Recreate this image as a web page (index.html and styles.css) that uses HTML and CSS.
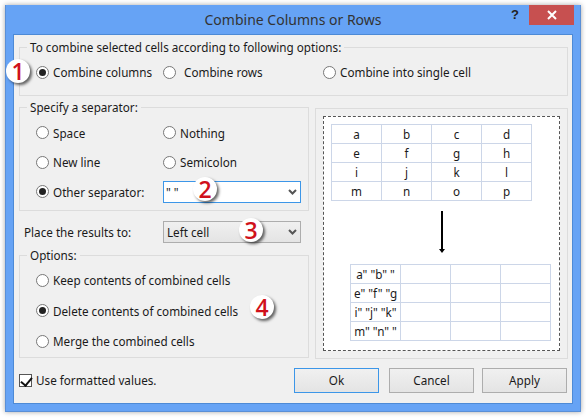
FILE: index.html
```html
<!DOCTYPE html>
<html lang="en">
<head>
<meta charset="utf-8">
<title>Combine Columns or Rows</title>
<link rel="stylesheet" href="styles.css">
</head>
<body>
<div class="window">
  <header class="titlebar">
    <span class="title">Combine Columns or Rows</span>
    <span class="help">?</span>
    <span class="close"><svg width="10" height="10" viewBox="0 0 10 10"><path d="M1 1L9 9M9 1L1 9" stroke="#fff" stroke-width="2"/></svg></span>
  </header>
  <main class="client">
    <fieldset class="group group-top">
      <legend>To combine selected cells according to following options:</legend>
      <div class="top-row">
        <label class="opt opt-a"><input type="radio" name="mode" checked><span>Combine columns</span></label>
        <label class="opt opt-b"><input type="radio" name="mode"><span class="wide">Combine rows</span></label>
        <label class="opt"><input type="radio" name="mode"><span>Combine into single cell</span></label>
      </div>
      <span class="badge badge-1">1</span>
    </fieldset>
    <div class="columns">
      <div class="left">
        <fieldset class="group group-sep">
          <legend>Specify a separator:</legend>
          <div class="sep-grid">
            <label class="opt"><input type="radio" name="sep"><span>Space</span></label>
            <label class="opt"><input type="radio" name="sep"><span>Nothing</span></label>
            <label class="opt"><input type="radio" name="sep"><span>New line</span></label>
            <label class="opt"><input type="radio" name="sep"><span>Semicolon</span></label>
            <label class="opt"><input type="radio" name="sep" checked><span>Other separator:</span></label>
            <div class="combo combo-edit"><span>" "</span><svg class="chev" width="9" height="6" viewBox="0 0 9 6"><path d="M1 1L4.500 4.500L8 1" fill="none" stroke="#555" stroke-width="2"/></svg></div>
          </div>
          <span class="badge badge-2">2</span>
        </fieldset>
        <div class="place">
          <span>Place the results to:</span>
          <div class="combo combo-btn"><span>Left cell</span><svg class="chev" width="9" height="6" viewBox="0 0 9 6"><path d="M1 1L4.500 4.500L8 1" fill="none" stroke="#555" stroke-width="2"/></svg></div>
          <span class="badge badge-3">3</span>
        </div>
        <fieldset class="group group-opts">
          <legend>Options:</legend>
          <div class="opts-list">
            <label class="opt"><input type="radio" name="res"><span>Keep contents of combined cells</span></label>
            <label class="opt"><input type="radio" name="res" checked><span>Delete contents of combined cells</span></label>
            <label class="opt"><input type="radio" name="res"><span>Merge the combined cells</span></label>
          </div>
          <span class="badge badge-4">4</span>
        </fieldset>
      </div>
      <section class="preview">
        <div class="dashed">
          <table class="sheet sheet-top">
            <tr><td>a</td><td>b</td><td>c</td><td>d</td></tr>
            <tr><td>e</td><td>f</td><td>g</td><td>h</td></tr>
            <tr><td>i</td><td>j</td><td>k</td><td>l</td></tr>
            <tr><td>m</td><td>n</td><td>o</td><td>p</td></tr>
          </table>
          <svg class="arrow" width="8" height="43" viewBox="0 0 8 43"><path d="M4 0V39" stroke="#000" stroke-width="2"/><path d="M1 38H7L4 42Z" fill="#000"/></svg>
          <table class="sheet sheet-bottom">
            <tr><td>a" "b" "</td><td></td><td></td><td></td></tr>
            <tr><td>e" "f" "g</td><td></td><td></td><td></td></tr>
            <tr><td>i" "j" "k"</td><td></td><td></td><td></td></tr>
            <tr><td>m" "n" "</td><td></td><td></td><td></td></tr>
          </table>
        </div>
      </section>
    </div>
    <div class="footer">
      <label class="check"><input type="checkbox" checked><span>Use formatted values.</span></label>
      <div class="buttons">
        <button class="btn btn-default" type="button">Ok</button>
        <button class="btn" type="button">Cancel</button>
        <button class="btn" type="button">Apply</button>
      </div>
    </div>
  </main>
</div>
</body>
</html>
```
FILE: styles.css
```css
* { box-sizing: border-box; }
html, body { margin: 0; padding: 0; background: #fff; }
body {
  width: 586px;
  height: 418px;
  padding: 5px 5px 6px 5px;
  font-family: "Noto Sans", "Open Sans", sans-serif;
  font-size: 11.7px;
  color: #1a1a1a;
  overflow: hidden;
}
.window {
  width: 576px;
  height: 407px;
  background: #66a3f5;
  border: 1px solid #5a8fd6;
  border-top: 0;
  box-shadow: 0 0 5px rgba(0,0,0,.35);
  display: flex;
  flex-direction: column;
}
.titlebar {
  height: 29px;
  position: relative;
  display: flex;
  justify-content: center;
  align-items: center;
  flex: none;
}
.title { font-size: 14px; color: #333; }
.help {
  position: absolute; left: 505px; top: 2px;
  font: bold 13px "Liberation Sans", sans-serif; color: #222;
}
.close {
  position: absolute; left: 523px; top: 0;
  width: 45px; height: 20px;
  background: #c75050;
  display: flex; align-items: center; justify-content: center;
}
.client {
  flex: 1;
  margin: 0 7px 7px 7px;
  background: #f0f0f0;
  border: 1px solid #4d8ad6;
  padding: 4px 4px 0 5px;
}
.group {
  position: relative;
  margin: 0;
  padding: 0;
  border: 1px solid #dcdcdc;
  min-width: 0;
}
.group legend {
  margin-left: 7px;
  padding: 0 3px;
  line-height: 17px;
  height: 17px;
  white-space: nowrap;
}
.group-top { height: 57px; }
.top-row { display: flex; padding: 8px 0 0 16px; }
.opt { display: flex; align-items: center; height: 16px; gap: 4px; white-space: nowrap; }
.opt-a { width: 127px; }
.opt-b { width: 160px; }
.opt .wide { margin-left: 4px; }
.opt input, .check input { appearance: none; margin: 0; flex: none; }
.opt input {
  width: 13px; height: 13px;
  border: 1px solid #777;
  border-radius: 50%;
  background: #fff;
  position: relative;
}
.opt input:checked::after {
  content: "";
  position: absolute; left: 2px; top: 2px;
  width: 7px; height: 7px;
  border-radius: 50%;
  background: #222;
}
.columns {
  display: grid;
  grid-template-columns: 290px 253px;
  column-gap: 6px;
  margin-top: 3px;
}
.left { display: flex; flex-direction: column; }
.group-sep { height: 112px; }
.sep-grid {
  display: grid;
  grid-template-columns: 127px 138px;
  grid-auto-rows: 29.500px;
  align-items: center;
  padding: 2px 0 0 16px;
}
.combo {
  height: 22px;
  display: flex;
  align-items: center;
  justify-content: space-between;
}
.combo-edit { background: #fff; border: 1px solid #3c96e8; padding: 0 3px 0 2px; }
.combo-btn {
  width: 138px;
  background: linear-gradient(#f0f0f0, #e4e4e4);
  border: 1px solid #adadad;
  padding: 0 3px;
}
.chev { flex: none; }
.place {
  position: relative;
  display: flex;
  align-items: center;
  height: 22px;
  margin-top: 10px;
  padding-left: 5px;
}
.place > span:first-child { width: 139px; }
.group-opts { height: 111px; margin-top: 4px; }
.opts-list { display: flex; flex-direction: column; padding: 0 0 0 16px; gap: 14.500px; margin-top: 8px; }
.preview {
  height: 251px;
  margin-top: 9px;
  border: 1px solid #dcdcdc;
  padding: 7px;
}
.dashed {
  height: 100%;
  width: 237px;
  background: #fff;
  border: 1px dashed #555;
  padding: 7px;
  display: flex;
  flex-direction: column;
  align-items: flex-start;
}
.sheet {
  border-collapse: collapse;
  table-layout: fixed;
  width: 201px;
  flex: none;
}
.sheet td {
  border: 1px solid #ccd6e8;
  height: 19px;
  padding: 0;
  text-align: center;
  font-size: 11.7px;
  line-height: 17px;
  white-space: nowrap;
  overflow: hidden;
}
.arrow { flex: none; margin: 10px 0 10px 107px; }
.sheet-bottom { margin-left: 19px; }
.footer {
  display: flex;
  justify-content: space-between;
  align-items: center;
  height: 24px;
  margin-top: 9px;
}
.check { display: flex; align-items: center; gap: 4px; }
.check input {
  width: 13px; height: 13px;
  border: 1px solid #555;
  background: #fff;
  position: relative;
}
.check input:checked::after {
  content: "";
  position: absolute; left: 3px; top: 0;
  width: 5px; height: 9px;
  border: solid #111;
  border-width: 0 2px 2px 0;
  transform: rotate(40deg);
}
.buttons { display: flex; gap: 10px; margin-right: 1px; }
.btn {
  width: 85px; height: 25px;
  font: inherit;
  color: inherit;
  background: linear-gradient(#f0f0f0, #e4e4e4);
  border: 1px solid #adadad;
  padding: 0;
}
.btn + .btn + .btn { margin-left: -2px; }
.btn-default { border-color: #3c96e8; }
.badge {
  position: absolute;
  width: 24px; height: 24px;
  border-radius: 50%;
  background: #fff;
  box-shadow: 2px 2px 3px rgba(0,0,0,.6);
  color: #d0111b;
  font: 600 23px/24px "Open Sans", sans-serif;
  text-align: center;
}
.badge-1 { left: -14px; top: 3px; }
.badge-2 { left: 173px; top: 61px; }
.badge-3 { left: 220px; top: -3px; }
.badge-4 { left: 230px; top: 31px; }
```
